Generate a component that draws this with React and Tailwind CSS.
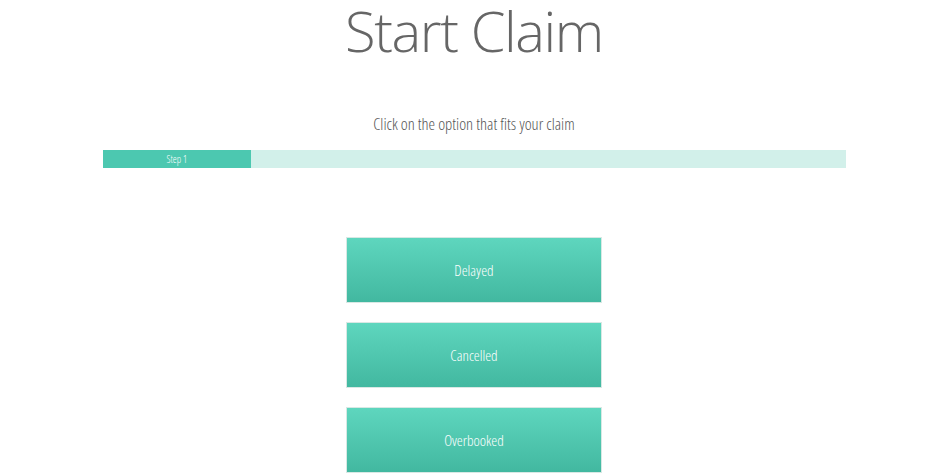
import React from "react";

const options = ["Delayed", "Cancelled", "Overbooked"];

export default function App() {
  return (
    <div className="min-h-screen bg-white pl-[18px]" style={{ fontFamily: "'Open Sans', sans-serif" }}>
      {/* HEADER */}
      <h1 className="text-center text-[56px] font-light leading-[60px] tracking-[-1.4px] text-[#666666]">
        Start Claim
      </h1>

      <p className="mt-[52px] text-center text-[16.5px] font-light leading-6 text-[#555555] font-stretch-condensed">
        Click on the option that fits your claim
      </p>

      {/* PROGRESS */}
      <div className="mx-auto mt-[14px] flex h-[18px] w-[743px] bg-[#d2f0ea]">
        <div className="flex w-[20%] items-center justify-center bg-[#4cc8b0] text-[10px] font-light text-white font-stretch-condensed">
          Step 1
        </div>
      </div>

      {/* OPTIONS */}
      <div className="mt-[69px] flex flex-col items-center gap-[19px]">
        {options.map((o) => (
          <button
            key={o}
            className="h-[66px] w-[256px] border border-[#d8e8e4] bg-gradient-to-b from-[#5ed6be] to-[#42b8a0] text-[15px] font-light text-white font-stretch-condensed"
          >
            {o}
          </button>
        ))}
      </div>
    </div>
  );
}
